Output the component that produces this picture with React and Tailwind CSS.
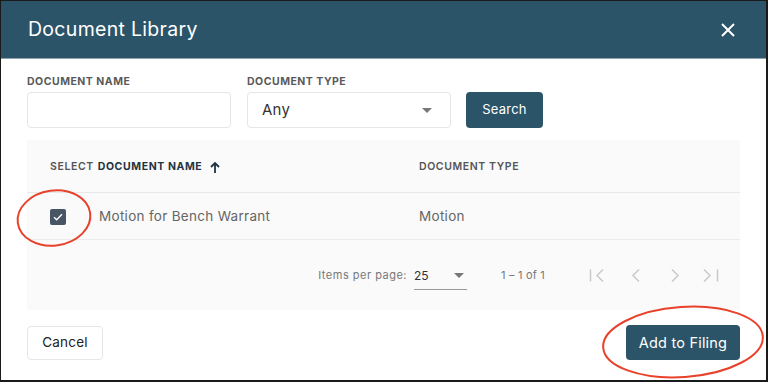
import React from "react";

const font = { fontFamily: "Inter, 'Open Sans', Arial, sans-serif" };

function Chev({ d, w }) {
  return (
    <svg width={w} height="13" viewBox={`0 0 ${w} 13`} fill="none" stroke="#c9c9c9" strokeWidth="1.5">
      <path d={d} />
    </svg>
  );
}

export default function App() {
  return (
    <div
      className="relative w-[768px] h-[382px] bg-white border-l border-t border-r-2 border-b-2 border-[#1a1a1a] flex flex-col overflow-hidden"
      style={font}
    >
      {/* Header */}
      <div className="h-[58px] bg-[#2c5468] border-b border-[#8ea3ae] flex items-center justify-between pl-[27px] pr-[30px] shrink-0">
        <span className="text-white text-[19.5px] font-normal tracking-[0.3px]">Document Library</span>
        <svg width="16" height="16" viewBox="0 0 16 16" stroke="white" strokeWidth="2" fill="none">
          <path d="M2 2 L14 14 M14 2 L2 14" />
        </svg>
      </div>

      <div className="flex flex-col px-[26px] pt-[16px]">
        {/* Search form */}
        <div className="flex items-end">
          <div className="flex flex-col w-[204px]">
            <span className="text-[10.5px] font-bold text-[#5a5a5a] leading-[14px] mb-[3px] tracking-[0.5px]">DOCUMENT NAME</span>
            <div className="h-[36px] rounded-[4px] border border-[#e6e6e6] bg-white" />
          </div>
          <div className="flex flex-col w-[204px] ml-[16px]">
            <span className="text-[10.5px] font-bold text-[#5a5a5a] leading-[14px] mb-[3px] tracking-[0.5px]">DOCUMENT TYPE</span>
            <div className="h-[36px] rounded-[4px] border border-[#e6e6e6] bg-white flex items-center justify-between pl-[14px] pr-[18px]">
              <span className="text-[15px] text-[#333] tracking-[0.2px]">Any</span>
              <svg width="10" height="5" viewBox="0 0 10 5"><path d="M0 0 L10 0 L5 5 Z" fill="#777" /></svg>
            </div>
          </div>
          <button className="ml-[15px] h-[36px] w-[77px] rounded-[4px] bg-[#2c5468] text-white text-[13px] tracking-[0.2px] flex items-center justify-center">
            Search
          </button>
        </div>

        {/* Table */}
        <div className="mt-[12px] bg-[#fafafa] flex flex-col">
          <div className="h-[53px] border-b border-[#e8e8e8] flex items-center pl-[23px] pt-[2px]">
            <div className="w-[369px] flex items-center">
              <span className="text-[10.5px] font-semibold text-[#555] tracking-[0.6px]">SELECT</span>
              <span className="ml-[4px] text-[10.5px] font-bold text-[#1f3342] tracking-[0.6px]">DOCUMENT NAME</span>
              <svg className="ml-[8px]" width="10" height="11" viewBox="0 0 10 11" fill="none" stroke="#1f3342" strokeWidth="1.8">
                <path d="M5 11 V1.5 M1 5 L5 1 L9 5" />
              </svg>
            </div>
            <span className="text-[10.5px] font-semibold text-[#555] tracking-[0.6px]">DOCUMENT TYPE</span>
          </div>
          <div className="h-[47px] border-b border-[#ececec] flex items-center pl-[23px] pt-[1px]">
            <div className="w-[49px] flex items-center">
              <div className="w-[16px] h-[16px] rounded-[2px] bg-[#475565] flex items-center justify-center">
                <svg width="10" height="8" viewBox="0 0 10 8" fill="none" stroke="white" strokeWidth="1.4">
                  <path d="M1 4.2 L3.7 6.8 L9 1.2" />
                </svg>
              </div>
            </div>
            <span className="w-[320px] text-[13.5px] text-[#666] tracking-[0.3px]">Motion for Bench Warrant</span>
            <span className="text-[13.5px] text-[#666] tracking-[0.3px]">Motion</span>
          </div>
          <div className="h-[70px] flex items-center justify-end pr-[21px]">
            <span className="text-[11px] text-[#777] tracking-[0.5px]">Items per page:</span>
            <div className="ml-[7px] w-[53px] h-[28px] border-b border-[#999] flex items-center justify-between pr-[3px] mt-[2px]">
              <span className="text-[12px] text-[#333]">25</span>
              <svg width="10" height="5" viewBox="0 0 10 5"><path d="M0 0 L10 0 L5 5 Z" fill="#777" /></svg>
            </div>
            <span className="ml-[34px] text-[11px] text-[#777] tracking-[0.2px]">1 – 1 of 1</span>
            <div className="ml-[44px] flex items-center">
              <Chev w={16} d="M1.5 0.5 V12.5 M14 0.5 L8 6.5 L14 12.5" />
              <span className="ml-[26px]"><Chev w={9} d="M8 0.5 L2 6.5 L8 12.5" /></span>
              <span className="ml-[31px]"><Chev w={9} d="M1 0.5 L7 6.5 L1 12.5" /></span>
              <span className="ml-[22px]"><Chev w={17} d="M2 0.5 L8 6.5 L2 12.5 M15.5 0.5 V12.5" /></span>
            </div>
          </div>
        </div>

        {/* Footer */}
        <div className="mt-[15px] flex items-center justify-between">
          <button className="h-[34px] w-[76px] rounded-[4px] border border-[#e6e6e6] bg-white text-[13.5px] text-[#222] tracking-[0.2px]">
            Cancel
          </button>
          <button className="h-[35px] w-[114px] rounded-[4px] bg-[#2c5468] text-white text-[14.5px] tracking-[0.2px]">
            Add to Filing
          </button>
        </div>
      </div>

      {/* Annotation ellipses */}
      <svg className="absolute left-0 top-0 pointer-events-none" width="768" height="382" viewBox="0 0 768 382" fill="none">
        <ellipse cx="53" cy="217" rx="36.5" ry="27.5" stroke="#e8422c" strokeWidth="2" transform="rotate(-8 53 217)" />
        <ellipse cx="682" cy="341" rx="80" ry="35" stroke="#e8422c" strokeWidth="2" transform="rotate(-4 682 341)" />
      </svg>
    </div>
  );
}
